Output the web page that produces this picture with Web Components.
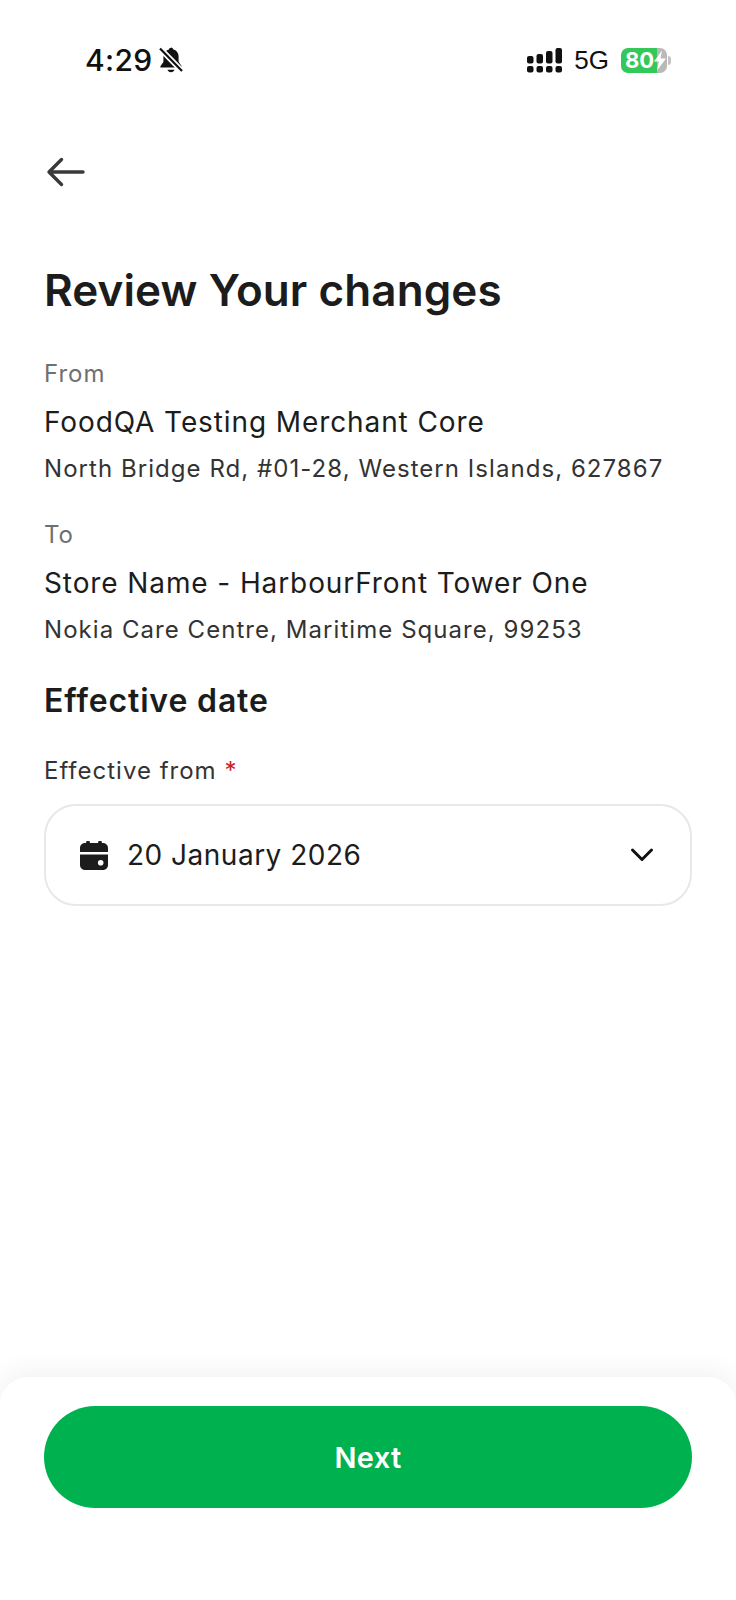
<!DOCTYPE html>
<html>
<head>
<meta charset="utf-8">
<title>Review Your changes</title>
<style>
  html, body { margin: 0; background: white; }
  body { font-family: Inter, "Noto Sans", sans-serif; color: #1a1a1a; }
</style>
</head>
<body>
<review-screen>
  <status-bar slot="status"></status-bar>
  <back-button slot="nav"></back-button>
  <h1 slot="title" style="margin:0;font-size:44px;line-height:52px;font-weight:600;letter-spacing:0.1px;color:#1c1c1c">Review Your changes</h1>
  <store-block label="From" name="FoodQA Testing Merchant Core" address="North Bridge Rd, #01-28, Western Islands, 627867"></store-block>
  <store-block label="To" name="Store Name - HarbourFront Tower One" address="Nokia Care Centre, Maritime Square, 99253"></store-block>
  <date-field heading="Effective date" label="Effective from" value="20 January 2026"></date-field>
  <bottom-bar slot="footer">Next</bottom-bar>
</review-screen>

<script>
class ReviewScreen extends HTMLElement {
    constructor() {
        super();
        this.attachShadow({ mode: 'open' });
        this.shadowRoot.innerHTML = `
            <style>
            :host {
                display: flex;
                flex-direction: column;
                height: 1600px;
                box-sizing: border-box;
                overflow: hidden;
            }
            .nav {
                padding: 0 44px;
                margin-top: 75px;
            }
            .title {
                padding: 0 44px;
                margin-top: 75px;
            }
            .content {
                display: flex;
                flex-direction: column;
                padding: 0 44px;
                margin-top: 41px;
                gap: 32px;
            }
            .footer {
                margin-top: auto;
            }
            </style>
            <slot name="status"></slot>
            <div class="nav"><slot name="nav"></slot></div>
            <div class="title"><slot name="title"></slot></div>
            <div class="content"><slot></slot></div>
            <div class="footer"><slot name="footer"></slot></div>
        `;
    }
}

class StatusBar extends HTMLElement {
    constructor() {
        super();
        this.attachShadow({ mode: 'open' });
        this.shadowRoot.innerHTML = `
            <style>
            :host {
                display: flex;
                justify-content: space-between;
                align-items: center;
                height: 40px;
                margin-top: 40px;
                padding: 0 65px 0 85px;
                color: #111;
            }
            .left, .right {
                display: flex;
                align-items: center;
            }
            .time {
                font-family: Inter, sans-serif;
                font-size: 30px;
                font-weight: 500;
                letter-spacing: 0.3px;
            }
            .left svg { margin-left: 6px; }
            .five {
                font-family: "Liberation Sans", sans-serif;
                font-size: 26px;
                margin-left: 11px;
            }
            .battery {
                position: relative;
                display: flex;
                align-items: center;
                width: 46px;
                height: 25px;
                margin-left: 12px;
                border-radius: 7px;
                overflow: hidden;
                background: linear-gradient(90deg, #34c759 0 36.5px, #b9b9b9 36.5px);
                color: white;
                font-family: Inter, sans-serif;
                font-size: 22px;
                font-weight: 700;
                padding-left: 4px;
                box-sizing: border-box;
            }
            .bolt { position: absolute; left: 32px; top: 2px; }
            .cap {
                width: 3px;
                height: 9px;
                margin-left: 1px;
                background: #c4c4c4;
                border-radius: 0 3px 3px 0;
            }
            </style>
            <div class="left">
                <span class="time">4:29</span>
                <svg width="26" height="28" viewBox="0 0 26 28">
                    <path d="M13 1.5c1.2 0 2 .8 2 1.8 3.6.9 5.6 3.7 5.6 7.4v5l3 4.300v1.500H2.400V20.200l3-4.300v-5c0-3.700 2-6.500 5.600-7.400 0-1 .8-1.800 2-1.800z" fill="#111"/>
                    <path d="M9.500 23.800h7c-.4 1.500-1.800 2.500-3.500 2.500s-3.100-1-3.500-2.500z" fill="#111"/>
                    <path d="M2 2.500 24 25" stroke="#fff" stroke-width="5.500"/>
                    <path d="M2 2.500 24 25" stroke="#111" stroke-width="2.200"/>
                </svg>
            </div>
            <div class="right">
                <svg width="36" height="25" viewBox="0 0 36 25" fill="#111">
                    <rect x="0" y="8" width="6.500" height="7.500" rx="2"/><rect x="0" y="18" width="6.500" height="6.500" rx="2"/>
                    <rect x="9.500" y="6" width="6.500" height="9.500" rx="2"/><rect x="9.500" y="18" width="6.500" height="6.500" rx="2"/>
                    <rect x="19" y="3" width="6.500" height="12.500" rx="2"/><rect x="19" y="18" width="6.500" height="6.500" rx="2"/>
                    <rect x="28.500" y="0" width="6.500" height="15.500" rx="2"/><rect x="28.500" y="18" width="6.500" height="6.500" rx="2"/>
                </svg>
                <span class="five">5G</span>
                <div class="battery">80
                    <svg class="bolt" width="14" height="21" viewBox="0 0 14 20">
                        <path d="M9 0 1 11h5l-2 9 9-12H7.500z" fill="#fff"/>
                    </svg>
                </div>
                <div class="cap"></div>
            </div>
        `;
    }
}

class BackButton extends HTMLElement {
    constructor() {
        super();
        this.attachShadow({ mode: 'open' });
        this.shadowRoot.innerHTML = `
            <style>
            :host { display: block; height: 34px; }
            svg { display: block; }
            </style>
            <svg width="42" height="34" viewBox="0 0 42 34" fill="none" stroke="#3a3a3a" stroke-width="3.400" stroke-linecap="round" stroke-linejoin="round">
                <path d="M39 17H6M17.500 4.500 5 17l12.500 12.500"/>
            </svg>
        `;
    }
}

class StoreBlock extends HTMLElement {
    constructor() {
        super();
        this.attachShadow({ mode: 'open' });
    }

    connectedCallback() {
        this.shadowRoot.innerHTML = `
            <style>
            :host { display: block; }
            .label {
                color: #6f6f6f;
                font-size: 24px;
                line-height: 34px;
                letter-spacing: 1px;
            }
            .name {
                color: #1c1c1c;
                font-size: 28px;
                line-height: 36px;
                margin-top: 13px;
                letter-spacing: 0.9px;
            }
            .address {
                color: #333;
                font-size: 24px;
                line-height: 34px;
                margin-top: 12px;
                letter-spacing: 1.05px;
                white-space: nowrap;
            }
            </style>
            <div class="label">${this.getAttribute("label")}</div>
            <div class="name">${this.getAttribute("name")}</div>
            <div class="address">${this.getAttribute("address")}</div>
        `;
    }
}

class DateField extends HTMLElement {
    constructor() {
        super();
        this.attachShadow({ mode: 'open' });
    }

    connectedCallback() {
        this.shadowRoot.innerHTML = `
            <style>
            :host { display: block; margin-top: 2px; }
            h2 {
                margin: 0;
                color: #1c1c1c;
                font-size: 32px;
                line-height: 40px;
                font-weight: 600;
                letter-spacing: 0.85px;
            }
            .label {
                color: #333;
                font-size: 24px;
                line-height: 34px;
                margin-top: 33px;
                letter-spacing: 1px;
            }
            .label span { color: #c8201f; }
            .box {
                display: flex;
                align-items: center;
                height: 102px;
                margin-top: 16px;
                padding: 0 36px 0 34px;
                box-sizing: border-box;
                border: 2px solid #e8e8e8;
                border-radius: 32px;
            }
            .value {
                flex: 1;
                margin-left: 19px;
                color: #1c1c1c;
                font-size: 28px;
                letter-spacing: 0.5px;
            }
            svg { display: block; flex: none; }
            </style>
            <h2>${this.getAttribute("heading")}</h2>
            <div class="label">${this.getAttribute("label")} <span>*</span></div>
            <div class="box">
                <svg width="28" height="29" viewBox="0 0 28 29">
                    <path d="M6.500 0h3l.5 2h8l.5-2h3l.5 2h1c2.800 0 5 2.200 5 5v4H0V7c0-2.800 2.200-5 5-5h1z" fill="#1c1c1c"/>
                    <path d="M0 13.500h28V24c0 2.800-2.200 5-5 5H5c-2.800 0-5-2.200-5-5z" fill="#1c1c1c"/>
                    <circle cx="20.700" cy="21.700" r="2.800" fill="#fff"/>
                </svg>
                <span class="value">${this.getAttribute("value")}</span>
                <svg width="24" height="16" viewBox="0 0 24 16" fill="none" stroke="#111" stroke-width="3" stroke-linecap="round" stroke-linejoin="round">
                    <path d="M2.500 3 12 12.500 21.500 3"/>
                </svg>
            </div>
        `;
    }
}

class BottomBar extends HTMLElement {
    constructor() {
        super();
        this.attachShadow({ mode: 'open' });
        this.shadowRoot.innerHTML = `
            <style>
            :host {
                display: block;
                height: 223px;
                padding: 29px 44px 0;
                box-sizing: border-box;
                background: white;
                border-radius: 28px 28px 0 0;
                box-shadow: 0 -8px 24px rgb(0 0 0 / 0.05);
            }
            button {
                display: block;
                width: 100%;
                height: 102px;
                border: 0;
                border-radius: 51px;
                background: #00b14f;
                color: white;
                font-family: Inter, sans-serif;
                font-size: 29px;
                font-weight: 600;
                letter-spacing: 0.3px;
            }
            </style>
            <button><slot></slot></button>
        `;
    }
}

customElements.define('review-screen', ReviewScreen);
customElements.define('status-bar', StatusBar);
customElements.define('back-button', BackButton);
customElements.define('store-block', StoreBlock);
customElements.define('date-field', DateField);
customElements.define('bottom-bar', BottomBar);
</script>
</body>
</html>
